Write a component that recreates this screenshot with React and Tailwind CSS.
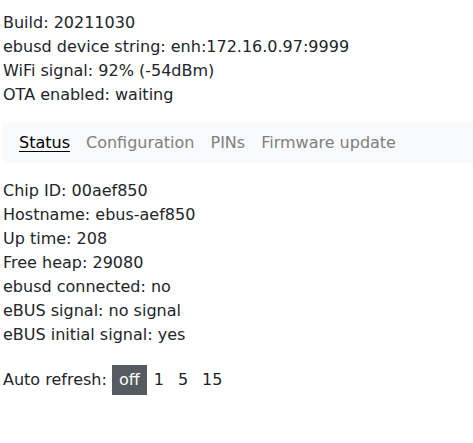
import React, { useState } from "react";

const info = [
  "Build: 20211030",
  "ebusd device string: enh:172.16.0.97:9999",
  "WiFi signal: 92% (-54dBm)",
  "OTA enabled: waiting",
];

const status = [
  "Chip ID: 00aef850",
  "Hostname: ebus-aef850",
  "Up time: 208",
  "Free heap: 29080",
  "ebusd connected: no",
  "eBUS signal: no signal",
  "eBUS initial signal: yes",
];

const tabs = ["Status", "Configuration", "PINs", "Firmware update"];
const refresh = ["off", "1", "5", "15"];

const App = () => {
  const [active, setActive] = useState("off");
  return (
    <div
      className="min-h-[443px] bg-white pl-[3px] pt-[11px] text-base leading-6 text-[#212529]"
      style={{ fontFamily: '"DejaVu Sans", sans-serif' }}
    >
      <div>
        {info.map((line) => (
          <div key={line}>{line}</div>
        ))}
      </div>

      <nav className="mt-4 flex bg-[#f8f9fa] px-2">
        {tabs.map((t, i) => (
          <a
            key={t}
            href="#"
            className={
              i === 0
                ? "px-2 py-2 text-black underline underline-offset-[3px]"
                : "px-2 py-2 text-[#7f8081]"
            }
          >
            {t}
          </a>
        ))}
      </nav>

      <div className="mt-4">
        {status.map((line) => (
          <div key={line}>{line}</div>
        ))}
      </div>

      <div className="mt-[18px] flex items-center">
        <span className="mr-[5px]">Auto refresh:</span>
        {refresh.map((r) => (
          <button
            key={r}
            onClick={() => setActive(r)}
            className={
              active === r
                ? "bg-[#555b61] px-[7px] py-[3px] text-white"
                : "px-[7px] py-[3px] text-[#212529]"
            }
          >
            {r}
          </button>
        ))}
      </div>
    </div>
  );
};

export default App;
